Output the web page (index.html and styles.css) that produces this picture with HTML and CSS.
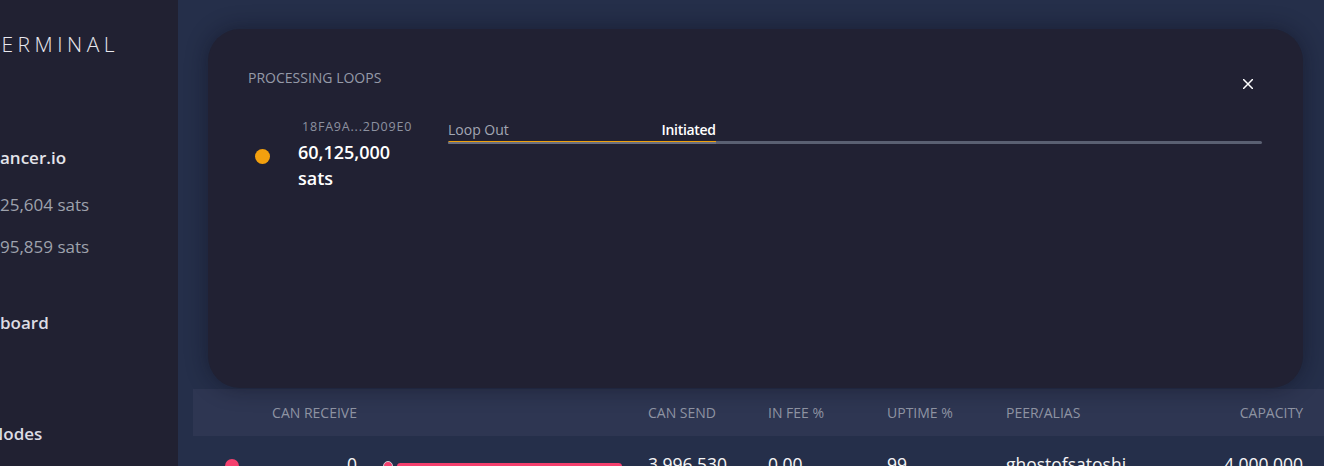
FILE: index.html
```html
<!DOCTYPE html>
<html lang="en">
<head>
<meta charset="utf-8">
<title>Lightning Terminal - Processing Loops</title>
<link rel="stylesheet" href="styles.css">
</head>
<body>
<div class="app">
  <aside class="sidebar">
    <div class="brand">TERMINAL</div>
    <div class="alias">ancer.io</div>
    <div class="bal bal-first">25,604 sats</div>
    <div class="bal">95,859 sats</div>
    <div class="nav nav-dash">board</div>
    <div class="nav nav-nodes">Nodes</div>
  </aside>
  <main class="main">
    <section class="modal">
      <header class="modal-head">
        <h2 class="modal-title">Processing Loops</h2>
        <button class="close" aria-label="Close">
          <svg width="10" height="10" viewBox="0 0 10 10"><path d="M0.5 0.5 L9.5 9.5 M9.5 0.5 L0.5 9.5" stroke="#ffffff" stroke-width="1.5" stroke-linecap="square" fill="none"/></svg>
        </button>
      </header>
      <div class="loop">
        <span class="loop-dot"></span>
        <div class="loop-info">
          <div class="loop-id">18FA9A...2D09E0</div>
          <div class="loop-amt">60,125,000 sats</div>
        </div>
        <div class="loop-progress">
          <div class="step" style="width:32.9%">
            <span class="step-type">Loop Out</span>
            <span class="step-state">Initiated</span>
          </div>
          <div class="track"><div class="fill" style="width:32.9%"></div></div>
        </div>
      </div>
    </section>
    <div class="table">
      <div class="row thead">
        <div></div>
        <div class="right">Can Receive</div>
        <div></div>
        <div>Can Send</div>
        <div>In Fee %</div>
        <div>Uptime %</div>
        <div>Peer/Alias</div>
        <div class="right">Capacity</div>
      </div>
      <div class="row trow">
        <div><span class="status"></span></div>
        <div class="right">0</div>
        <div class="balance"><span class="knob"></span><span class="bar"></span></div>
        <div>3,996,530</div>
        <div>0.00</div>
        <div>99</div>
        <div>ghostofsatoshi</div>
        <div class="right">4,000,000</div>
      </div>
    </div>
  </main>
</div>
</body>
</html>
```

FILE: styles.css
```css
* { box-sizing: border-box; }
html, body {
  margin: 0;
  padding: 0;
  width: 1324px;
  height: 466px;
  overflow: hidden;
  background: #252f4a;
  font-family: "Open Sans", "Liberation Sans", sans-serif;
}
.app {
  display: flex;
  height: 466px;
}
.sidebar {
  width: 178px;
  flex: none;
  background: #212132;
  overflow: hidden;
  padding-top: 30px;
  white-space: nowrap;
}
.brand {
  font-size: 21px;
  line-height: 28px;
  font-weight: 300;
  letter-spacing: 4.5px;
  color: #e8e8ee;
  margin-left: -14px;
}
.alias {
  margin-top: 88px;
  font-size: 17px;
  line-height: 24px;
  font-weight: 600;
  color: #e4e4ea;
}
.bal {
  font-size: 17px;
  line-height: 24px;
  color: #9ea2ad;
  margin-top: 18px;
}
.bal-first { margin-top: 23px; }
.nav {
  font-size: 17px;
  line-height: 24px;
  font-weight: 600;
  color: #dcdce4;
}
.nav-dash { margin-top: 52px; }
.nav-nodes { margin-top: 87px; margin-left: -10px; }

.main {
  flex: 1;
  min-width: 0;
  display: flex;
  flex-direction: column;
}
.modal {
  flex: none;
  margin: 29px 21px 0 30px;
  height: 359px;
  background: #212133;
  border-radius: 32px;
  box-shadow: 0 0 22px rgba(10, 12, 24, 0.45);
  padding: 39px 41px 0 40px;
  position: relative;
  z-index: 2;
}
.modal-head {
  display: flex;
  justify-content: space-between;
  align-items: flex-start;
  height: 19px;
}
.modal-title {
  margin: 0;
  font-size: 14px;
  line-height: 19px;
  font-weight: 500;
  text-transform: uppercase;
  color: #959aa8;
}
.close {
  margin: 11px 9px 0 0;
  padding: 0;
  border: 0;
  background: none;
  width: 10px;
  height: 10px;
  display: block;
}
.close svg { display: block; }
.loop {
  margin-top: 32px;
  display: flex;
  align-items: flex-start;
}
.loop-dot {
  flex: none;
  width: 15px;
  height: 15px;
  border-radius: 50%;
  background: #f3a00e;
  margin: 30px 0 0 7px;
}
.loop-info {
  flex: none;
  width: 110px;
  margin-left: 28px;
}
.loop-id {
  font-size: 12.5px;
  line-height: 16px;
  letter-spacing: 0.8px;
  color: #8d91a0;
  padding-left: 4px;
  margin-bottom: 4px;
}
.loop-amt {
  font-size: 18px;
  line-height: 26px;
  font-weight: 600;
  color: #ffffff;
}
.loop-progress {
  flex: 1;
  margin-left: 40px;
  margin-top: 1px;
}
.step {
  display: flex;
  justify-content: space-between;
  font-size: 14px;
  line-height: 19px;
  white-space: nowrap;
}
.step-type { color: #a3a7b3; }
.step-state { color: #ffffff; font-weight: 600; letter-spacing: -0.3px; }
.track {
  margin-top: 2px;
  height: 3px;
  border-radius: 2px;
  background: #5a6072;
}
.fill {
  height: 3px;
  border-radius: 2px 0 0 2px;
  background: linear-gradient(#efa00b 0 1px, #6a6f80 1px);
}

.table {
  flex: none;
  margin: 1px 0 0 15px;
}
.row {
  display: grid;
  grid-template-columns: 57px 107px 291px 120px 119px 119px 1fr 120px;
  padding-right: 21px;
  align-items: center;
}
.thead {
  height: 47px;
  background: #2e3652;
  font-size: 14px;
  font-weight: 500;
  color: #8f94a3;
  text-transform: uppercase;
}
.right { text-align: right; }
.trow {
  padding-top: 15px;
  font-size: 17.5px;
  line-height: 26px;
  color: #f5f5f5;
  align-items: start;
  white-space: nowrap;
}
.status {
  display: block;
  width: 14px;
  height: 14px;
  border-radius: 50%;
  background: #f5406e;
  margin: 8px 0 0 32px;
}
.balance {
  display: flex;
  align-items: center;
  padding: 10px 26px 0 26px;
  gap: 4px;
}
.knob {
  width: 10px;
  height: 10px;
  border-radius: 50%;
  background: #f5406e;
  border: 1.5px solid #c9cbd3;
  flex: none;
}
.bar {
  flex: 1;
  height: 7px;
  border-radius: 4px;
  background: #f5406e;
}
```
